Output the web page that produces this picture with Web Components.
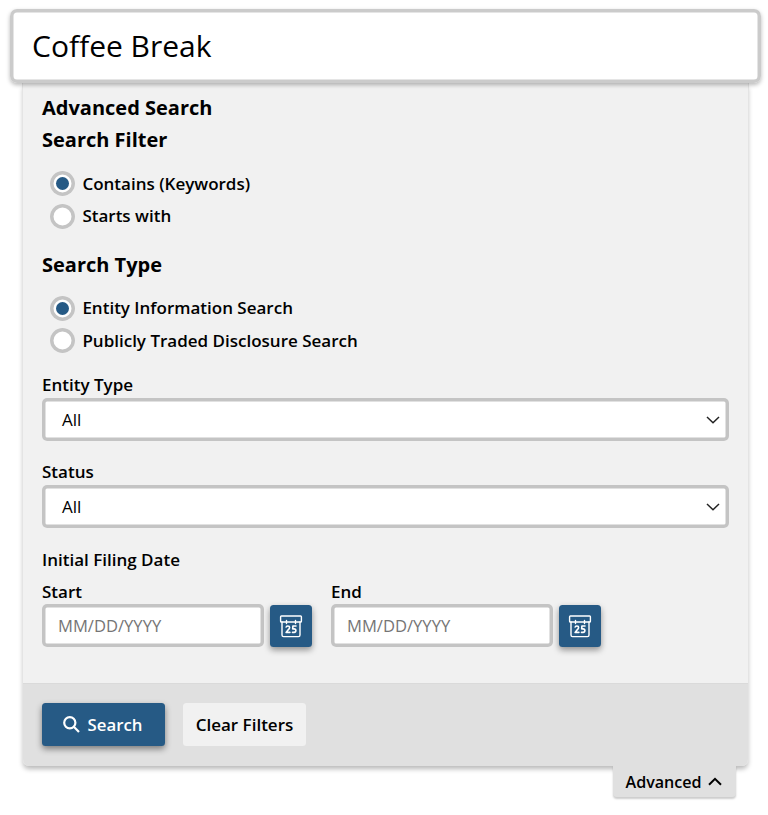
<!DOCTYPE html>
<html lang="en">
<head>
<meta charset="utf-8">
<title>Business Search</title>
<style>
  body {
    margin: 0;
    background: #fff;
    color: #000;
    font-family: "Open Sans", "Noto Sans", sans-serif;
    font-size: 17px;
  }
</style>
</head>
<body>
<search-page>
  <search-box value="Coffee Break"></search-box>
  <advanced-panel>
    <panel-heading>Advanced Search</panel-heading>
    <panel-heading>Search Filter</panel-heading>
    <radio-group>
      <radio-option checked>Contains (Keywords)</radio-option>
      <radio-option>Starts with</radio-option>
    </radio-group>
    <panel-heading class="type">Search Type</panel-heading>
    <radio-group>
      <radio-option checked>Entity Information Search</radio-option>
      <radio-option>Publicly Traded Disclosure Search</radio-option>
    </radio-group>
    <select-field label="Entity Type" value="All"></select-field>
    <select-field label="Status" value="All"></select-field>
    <date-range label="Initial Filing Date">
      <date-field label="Start" placeholder="MM/DD/YYYY"></date-field>
      <date-field label="End" placeholder="MM/DD/YYYY"></date-field>
    </date-range>
    <action-button slot="footer" primary>Search</action-button>
    <action-button slot="footer">Clear Filters</action-button>
  </advanced-panel>
  <advanced-toggle>Advanced</advanced-toggle>
</search-page>

<script>
class BaseElement extends HTMLElement {
    connectedCallback() {
        if (this.shadowRoot) {
            return;
        }
        const shadowRoot = this.attachShadow({ mode: "open" });
        shadowRoot.innerHTML = this._render();
    }
    get label() {
        return this.getAttribute("label");
    }
    get value() {
        return this.getAttribute("value");
    }
}

class SearchPage extends BaseElement {
    _render() {
        return `
          <style>
            :host {
              display: flex;
              flex-direction: column;
              box-sizing: border-box;
              width: 768px;
              height: 815px;
              padding: 9px 7px 0 10px;
            }
          </style>
          <slot></slot>`;
    }
}

class SearchBox extends BaseElement {
    _render() {
        return `
          <style>
            :host {
              display: flex;
              align-items: center;
              box-sizing: border-box;
              height: 74px;
              padding: 0 22px 1px;
              border-radius: 7px;
              background: #fff;
              box-shadow: inset 0 0 0 3.5px #cbcbcb, 0 2px 4px rgba(0, 0, 0, .28);
              position: relative;
              z-index: 1;
              font-size: 30px;
            }
          </style>
          <span>${this.value}</span>`;
    }
}

class AdvancedPanel extends BaseElement {
    _render() {
        return `
          <style>
            :host {
              display: flex;
              flex-direction: column;
              box-sizing: border-box;
              width: 726.4px;
              height: 683px;
              margin-left: 12.4px;
              border: solid #e4e4e4;
              border-width: 0 1px;
              border-radius: 0 0 7px 7px;
              background: #f1f1f1;
              box-shadow: 0 4px 5px -1px rgba(0, 0, 0, .28);
              overflow: hidden;
            }
            .body {
              flex: 1;
              padding: 8.8px 18.8px 0 18.6px;
            }
            .footer {
              display: flex;
              align-items: center;
              gap: 18px;
              box-sizing: border-box;
              height: 83px;
              padding: 0 18.6px 2px;
              background: #e0e0e0;
              border-top: 1px solid #dadada;
            }
            ::slotted(.type) {
              margin-top: 16px;
            }
          </style>
          <div class="body"><slot></slot></div>
          <div class="footer"><slot name="footer"></slot></div>`;
    }
}

class PanelHeading extends BaseElement {
    _render() {
        return `
          <style>
            :host {
              display: block;
              font-size: 20px;
              font-weight: 700;
              line-height: 32.5px;
            }
          </style>
          <slot></slot>`;
    }
}

class RadioGroup extends BaseElement {
    _render() {
        return `
          <style>
            :host {
              display: flex;
              flex-direction: column;
              padding: 10.6px 0 0 8.4px;
            }
          </style>
          <slot></slot>`;
    }
}

class RadioOption extends BaseElement {
    _render() {
        return `
          <style>
            :host {
              display: flex;
              align-items: center;
              gap: 7px;
              height: 32.7px;
              font-weight: 600;
            }
            .ring {
              display: grid;
              place-items: center;
              box-sizing: border-box;
              width: 25px;
              height: 25px;
              box-shadow: inset 0 0 0 3.5px #c4c4c4;
              border-radius: 50%;
              background: #fff;
            }
            .text {
              line-height: 23px;
              padding-bottom: 1px;
            }
            :host([checked]) .ring::after {
              content: "";
              width: 13px;
              height: 13px;
              border-radius: 50%;
              background: #265a85;
            }
          </style>
          <span class="ring"></span><span class="text"><slot></slot></span>`;
    }
}

class SelectField extends BaseElement {
    _render() {
        return `
          <style>
            :host {
              display: block;
              padding-top: 15px;
              margin-bottom: 3px;
            }
            .label {
              font-weight: 600;
              line-height: 26px;
            }
            .control {
              display: flex;
              align-items: center;
              justify-content: space-between;
              box-sizing: border-box;
              height: 43px;
              padding: 0 8.5px 0 20px;
              box-shadow: inset 0 0 0 3.5px #c4c4c4;
              border-radius: 5px;
              background: #fff;
            }
          </style>
          <div class="label">${this.label}</div>
          <div class="control">
            <span>${this.value}</span>
            <svg width="14" height="8" viewBox="0 0 14 8" fill="none" stroke="#222" stroke-width="1.5">
              <path d="M1 1l6 5.7L13 1"/>
            </svg>
          </div>`;
    }
}

class DateRange extends BaseElement {
    _render() {
        return `
          <style>
            :host {
              display: block;
              padding-top: 16px;
            }
            .label {
              font-weight: 600;
              line-height: 26px;
            }
            .fields {
              display: flex;
              gap: 19px;
              margin-top: 6px;
            }
          </style>
          <div class="label">${this.label}</div>
          <div class="fields"><slot></slot></div>`;
    }
}

class DateField extends BaseElement {
    _render() {
        return `
          <style>
            :host {
              display: block;
            }
            .label {
              font-weight: 600;
              line-height: 25px;
            }
            .row {
              display: flex;
              align-items: flex-end;
              gap: 6px;
            }
            .input {
              display: flex;
              align-items: center;
              box-sizing: border-box;
              width: 222px;
              height: 43px;
              padding-left: 16px;
              box-shadow: inset 0 0 0 3.5px #c4c4c4;
              border-radius: 5px;
              background: #fff;
              color: #757575;
              font-size: 16.6px;
            }
            .picker {
              display: grid;
              place-items: center;
              width: 42px;
              height: 42px;
              border-radius: 3.5px;
              background: #265a85;
              box-shadow: 0 3px 6px rgba(0, 0, 0, .4);
            }
          </style>
          <div class="label">${this.label}</div>
          <div class="row">
            <div class="input">${this.getAttribute("placeholder")}</div>
            <div class="picker">
              <svg width="24" height="24" viewBox="0 0 24 24" fill="none" stroke="#fff" stroke-width="1.4" stroke-linecap="round" stroke-linejoin="round">
                <rect x="1.6" y="2" width="20.8" height="6" rx=".8"/>
                <path d="M3 8v13q0 1.6 1.6 1.6h14.8q1.6 0 1.6-1.6V8M7.5 6.4v3.2M16.5 6.4v3.2"/>
                <path stroke-width="1.6" d="M7.2 13q.5-1 1.7-1 1.7 0 1.7 1.5 0 1-1.4 2.3L7.1 18.4h3.8M17 12h-3.1l-.2 2.9h1.3q1.9 0 1.9 1.7t-1.9 1.8h-1.5"/>
              </svg>
            </div>
          </div>`;
    }
}

class ActionButton extends BaseElement {
    _render() {
        const icon = this.hasAttribute("primary") ? `
          <svg width="17" height="17" viewBox="0 0 17 17" fill="none" stroke="#fff" stroke-width="2.2">
            <circle cx="6.8" cy="6.8" r="5.6"/>
            <path d="M10.8 10.8l5.2 5.2"/>
          </svg>` : "";
        return `
          <style>
            :host {
              display: flex;
              align-items: center;
              justify-content: center;
              gap: 8px;
              width: 123px;
              height: 43px;
              border-radius: 3.5px;
              background: #f1f1f1;
              font-weight: 600;
            }
            :host([primary]) {
              box-sizing: border-box;
              padding-right: 2px;
              background: #265a85;
              color: #fff;
              font-size: 16.8px;
              box-shadow: 0 3px 6px rgba(0, 0, 0, .45);
            }
          </style>
          ${icon}<span><slot></slot></span>`;
    }
}

class AdvancedToggle extends BaseElement {
    _render() {
        return `
          <style>
            :host {
              display: flex;
              align-items: center;
              box-sizing: border-box;
              gap: 6px;
              align-self: flex-end;
              width: 123px;
              height: 32px;
              margin: -1px 25px 0 0;
              padding: 1px 0 0 12.5px;
              border-radius: 0 0 4px 4px;
              background: #e0e0e0;
              box-shadow: 0 2px 2px rgba(0, 0, 0, .2);
              clip-path: inset(0 -6px -8px -6px);
              position: relative;
              font-size: 16.1px;
              font-weight: 600;
            }
          </style>
          <span><slot></slot></span>
          <svg width="14" height="9" viewBox="0 0 14 9" fill="none" stroke="#000" stroke-width="2">
            <path d="M1 7.8l6-6 6 6"/>
          </svg>`;
    }
}

window.customElements.define("search-page", SearchPage);
window.customElements.define("search-box", SearchBox);
window.customElements.define("advanced-panel", AdvancedPanel);
window.customElements.define("panel-heading", PanelHeading);
window.customElements.define("radio-group", RadioGroup);
window.customElements.define("radio-option", RadioOption);
window.customElements.define("select-field", SelectField);
window.customElements.define("date-range", DateRange);
window.customElements.define("date-field", DateField);
window.customElements.define("action-button", ActionButton);
window.customElements.define("advanced-toggle", AdvancedToggle);
</script>
</body>
</html>
